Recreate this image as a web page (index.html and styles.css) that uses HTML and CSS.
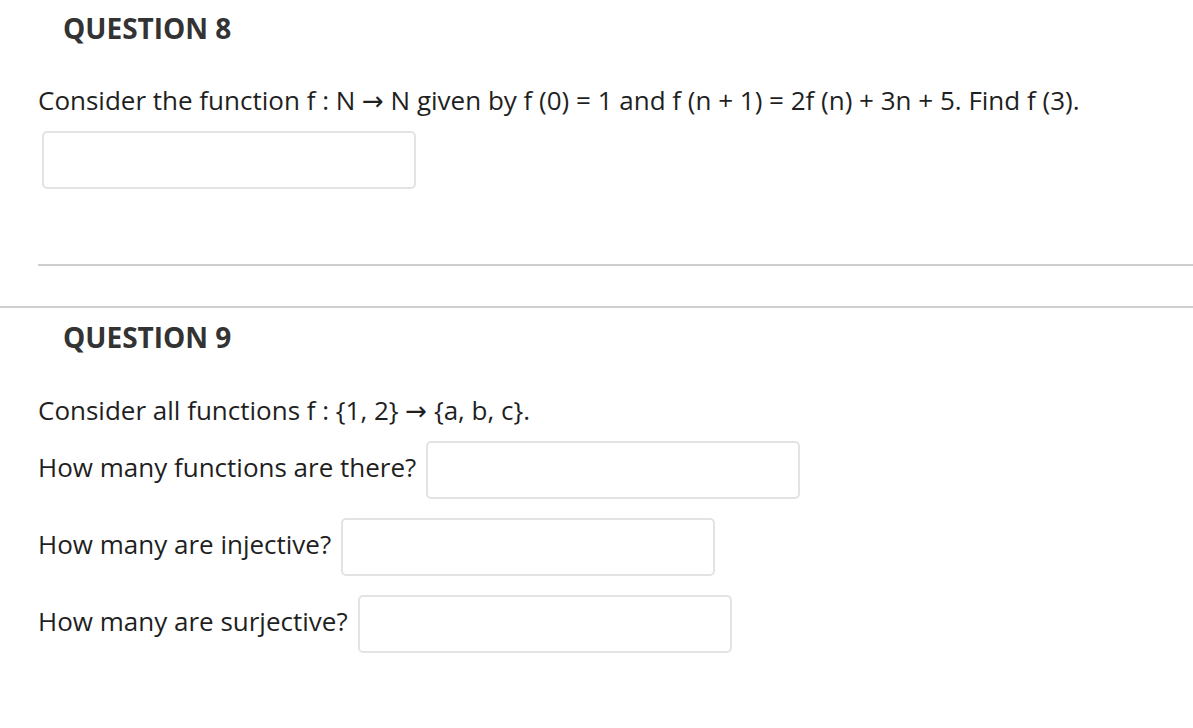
FILE: index.html
```html
<!DOCTYPE html>
<html lang="en">
<head>
<meta charset="utf-8">
<title>Questions</title>
<link rel="stylesheet" href="styles.css">
</head>
<body>
<section class="question q8">
  <h2 class="q-title">QUESTION 8</h2>
  <p class="q-text">Consider the function f : N → N given by f (0) = 1 and f (n + 1) = 2f (n) + 3n + 5. Find f (3).</p>
  <div class="answer answer-solo"></div>
</section>
<div class="rule rule-inset"></div>
<div class="rule rule-full"></div>
<section class="question q9">
  <h2 class="q-title">QUESTION 9</h2>
  <p class="q-text">Consider all functions f : {1, 2} → {a, b, c}.</p>
  <div class="row row-first">
    <span class="label">How many functions are there?</span>
    <div class="answer"></div>
  </div>
  <div class="row">
    <span class="label">How many are injective?</span>
    <div class="answer"></div>
  </div>
  <div class="row">
    <span class="label">How many are surjective?</span>
    <div class="answer"></div>
  </div>
</section>
</body>
</html>
```

FILE: styles.css
```css
html, body {
  margin: 0;
  padding: 0;
  background: #ffffff;
}
body {
  font-family: "Open Sans", "Noto Sans", "DejaVu Sans", sans-serif;
  color: #1f1f1f;
}
.question {
  padding-left: 38px;
}
.q-title {
  margin: 0 0 0 25px;
  font-size: 28px;
  line-height: 28px;
  font-weight: 700;
  color: #333333;
}
.q8 {
  padding-top: 14px;
}
.q-text {
  margin: 0;
  font-size: 26px;
  line-height: 30px;
}
.q8 .q-text {
  margin-top: 43px;
}
.answer {
  box-sizing: border-box;
  width: 374px;
  height: 58px;
  border: 2px solid #e3e3e3;
  border-radius: 5px;
  background: #ffffff;
  flex: none;
}
.answer-solo {
  margin: 16px 0 0 4px;
}
.rule {
  height: 2px;
  background: #cfcfcf;
}
.rule-inset {
  margin: 75px 0 0 38px;
}
.rule-full {
  margin-top: 40px;
}
.q9 {
  padding-top: 15px;
}
.q9 .q-text {
  margin-top: 44px;
}
.row {
  display: flex;
  align-items: center;
  gap: 10px;
  margin-top: 19px;
  font-size: 26px;
  line-height: 30px;
}
.row-first {
  margin-top: 16px;
}
.label {
  margin-bottom: 7px;
}
```
